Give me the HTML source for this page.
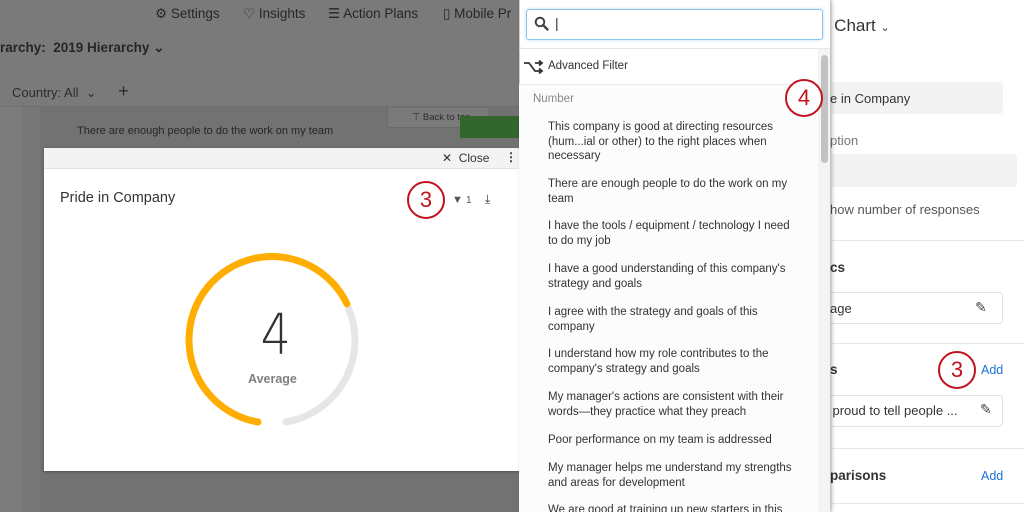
<!DOCTYPE html>
<html><head><meta charset="utf-8"><style>
*{margin:0;padding:0;box-sizing:border-box}
html,body{width:1024px;height:512px;overflow:hidden}
body{position:relative;background:#767676;font-family:"Liberation Sans",sans-serif}
.a{position:absolute}
.t{position:absolute;white-space:nowrap}
.os{font-family:"DejaVu Sans","Liberation Sans",sans-serif}
.item{position:absolute;left:548px;font-size:11.5px;line-height:14.5px;color:#333;width:250px}
.circ{position:absolute;width:38px;height:38px;border:2.5px solid #c1121f;border-radius:50%;background:#fff;color:#c1121f;font-size:22px;text-align:center;line-height:33px;font-family:"Liberation Sans",sans-serif}
</style></head><body>
<div class="a" style="left:0;top:0;width:22px;height:512px;background:#7c7c7c"></div>
<div class="a" style="left:0;top:0;width:830px;height:107px;background:#7a7a7a"></div>
<div class="a" style="left:0;top:106px;width:830px;height:1px;background:#6e6e6e"></div>
<div class="a" style="left:22px;top:107px;width:18px;height:405px;background:#777"></div>
<div class="a" style="left:40px;top:107px;width:480px;height:405px;background:#727272"></div>
<div class="t" style="left:155px;top:6px;font-size:13.5px;color:#262626">⚙ Settings</div>
<div class="t" style="left:243px;top:6px;font-size:13.5px;color:#262626">♡ Insights</div>
<div class="t" style="left:328px;top:6px;font-size:13.5px;color:#262626">☰ Action Plans</div>
<div class="t" style="left:443px;top:6px;font-size:13.5px;color:#262626">▯ Mobile Pr</div>
<div class="t" style="left:0;top:40px;font-size:13.5px;font-weight:bold;color:#262626">rarchy:&nbsp; 2019 Hierarchy ⌄</div>
<div class="t" style="left:12px;top:81px;font-size:13px;color:#2c2c2c">Country: All&nbsp; ⌄ &nbsp; &nbsp; &nbsp;<span style="font-size:18px">+</span></div>
<div class="a" style="left:387px;top:108px;width:103px;height:20px;background:#7a7a7a;border:1px solid #6a6a6a;border-top:none;border-radius:0 0 3px 3px"></div>
<div class="t" style="left:412px;top:112px;font-size:9.5px;color:#2e2e2e">⊤ Back to top</div>
<div class="a" style="left:460px;top:116px;width:60px;height:22px;background:#33662d"></div>
<div class="t" style="left:77px;top:125px;font-size:11px;color:#262626">There are enough people to do the work on my team</div>
<div class="a" style="left:44px;top:148px;width:476px;height:323px;background:#fff;box-shadow:0 1px 3px rgba(0,0,0,.3)"></div>
<div class="a" style="left:44px;top:148px;width:476px;height:21px;background:#f3f3f3;border-bottom:1px solid #e3e3e3"></div>
<div class="t" style="left:442px;top:151px;font-size:12px;color:#333">✕&nbsp; Close</div>
<div class="t" style="left:505px;top:150px;font-size:12px;color:#333;font-weight:bold">⋮</div>
<div class="t" style="left:60px;top:190px;font-size:14.5px;color:#333">Pride in Company</div>
<div class="t" style="left:452px;top:194px;font-size:11px;color:#555">▼ <span style="font-size:10px">1</span></div>
<div class="t" style="left:485px;top:192px;font-size:12px;color:#333">⤓</div>
<svg class="a" style="left:44px;top:148px" width="476" height="323">
<g transform="translate(228,192)" fill="none" stroke-width="7" stroke-linecap="round">
<path d="M -83 1 A 83 83 0 0 0 -14 82" stroke="#ffae00"/>
<path d="M -83 -1 A 83 83 0 0 1 75 -36" stroke="#ffae00"/>
<path d="M 76 -33 A 83 83 0 0 1 83 -1" stroke="#e6e6e6" stroke-linecap="butt"/>
<path d="M 83 1 A 83 83 0 0 1 14 82" stroke="#e6e6e6"/>
</g>
</svg>
<div class="t" style="left:258px;top:306px;font-size:56px;font-weight:300;color:#333;font-family:'DejaVu Sans',sans-serif;transform:scaleX(.85);line-height:60px">4</div>
<div class="t" style="left:248px;top:372px;font-size:12.5px;font-weight:bold;color:#808080">Average</div>
<div class="a" style="left:818px;top:0;width:206px;height:512px;background:#fff"></div>
<div class="a" style="left:818px;top:0;width:14px;height:512px;background:linear-gradient(90deg,#ddd,#f6f6f6)"></div>
<div class="t" style="left:820px;top:16px;font-size:17px;color:#333">e Chart <span style="font-size:11px">⌄</span></div>
<div class="a" style="left:820px;top:82px;width:183px;height:32px;background:#f3f3f3;border-radius:4px"></div>
<div class="t" style="left:830px;top:91px;font-size:13px;color:#333">e in Company</div>
<div class="t" style="left:830px;top:133px;font-size:13px;color:#777">ption</div>
<div class="a" style="left:820px;top:154px;width:197px;height:33px;background:#f3f3f3;border-radius:4px"></div>
<div class="t" style="left:830px;top:202px;font-size:13px;color:#555">how number of responses</div>
<div class="a" style="left:820px;top:240px;width:204px;height:1px;background:#e6e6e6"></div>
<div class="t" style="left:830px;top:260px;font-size:13.5px;font-weight:bold;color:#333">cs</div>
<div class="a" style="left:820px;top:292px;width:183px;height:32px;border:1px solid #e2e2e2;border-radius:4px"></div>
<div class="t" style="left:830px;top:301px;font-size:13px;color:#333">age</div>
<div class="t" style="left:975px;top:299px;font-size:14px;color:#444">✎</div>
<div class="a" style="left:820px;top:343px;width:204px;height:1px;background:#e6e6e6"></div>
<div class="t" style="left:830px;top:362px;font-size:13.5px;font-weight:bold;color:#333">s</div>
<div class="t" style="left:981px;top:363px;font-size:12.5px;color:#1a73d9">Add</div>
<div class="a" style="left:820px;top:395px;width:183px;height:32px;border:1px solid #e2e2e2;border-radius:4px"></div>
<div class="t" style="left:826px;top:403px;font-size:13px;color:#333">l proud to tell people ...</div>
<div class="t" style="left:980px;top:401px;font-size:14px;color:#444">✎</div>
<div class="a" style="left:820px;top:448px;width:204px;height:1px;background:#e6e6e6"></div>
<div class="t" style="left:830px;top:468px;font-size:13.5px;font-weight:bold;color:#333">parisons</div>
<div class="t" style="left:981px;top:469px;font-size:12.5px;color:#1a73d9">Add</div>
<div class="a" style="left:820px;top:503px;width:204px;height:1px;background:#e6e6e6"></div>
<div class="a" style="left:519px;top:0;width:311px;height:512px;background:#fff;border-left:1px solid #ccc;box-shadow:2px 0 4px rgba(0,0,0,.25)"></div>
<div class="a" style="left:526px;top:9px;width:297px;height:31px;border:1.5px solid #8cc4ee;border-radius:3px;box-shadow:0 0 3px #b9dcf6"></div>
<svg class="a" style="left:534px;top:16px" width="16" height="16"><circle cx="6" cy="6" r="4.3" fill="none" stroke="#444" stroke-width="2"/><path d="M9 9 L13.5 13.5" stroke="#444" stroke-width="2.4" stroke-linecap="round"/></svg>
<div class="t" style="left:555px;top:15px;font-size:14px;color:#333">|</div>
<div class="a" style="left:519px;top:48px;width:311px;height:1px;background:#e5e5e5"></div>
<svg class="a" style="left:523px;top:60px" width="22" height="14"><path d="M1 3 H6 L12 11 H19 M12 3 H19 M16 0.5 L19 3 L16 5.5 M16 8.5 L19 11 L16 13.5" fill="none" stroke="#333" stroke-width="1.8"/></svg>
<div class="t" style="left:548px;top:60px;font-size:11.5px;color:#333">Advanced Filter</div>
<div class="a" style="left:519px;top:84px;width:299px;height:1px;background:#e8e8e8"></div>
<div class="a" style="left:519px;top:85px;width:299px;height:427px;background:#fcfcfc"></div>
<div class="t" style="left:533px;top:93px;font-size:11.5px;color:#888">Number</div>
<div class="item" style="top:120px">This company is good at directing resources (hum...ial or other) to the right places when necessary</div>
<div class="item" style="top:177px">There are enough people to do the work on my team</div>
<div class="item" style="top:219px">I have the tools / equipment / technology I need to do my job</div>
<div class="item" style="top:262px">I have a good understanding of this company's strategy and goals</div>
<div class="item" style="top:305px">I agree with the strategy and goals of this company</div>
<div class="item" style="top:347px">I understand how my role contributes to the company's strategy and goals</div>
<div class="item" style="top:390px">My manager's actions are consistent with their words—they practice what they preach</div>
<div class="item" style="top:433px">Poor performance on my team is addressed</div>
<div class="item" style="top:461px">My manager helps me understand my strengths and areas for development</div>
<div class="item" style="top:503px">We are good at training up new starters in this</div>
<div class="a" style="left:818px;top:49px;width:12px;height:463px;background:#f4f4f4"></div>
<div class="a" style="left:821px;top:55px;width:7px;height:108px;background:#c2c2c2;border-radius:4px"></div>
<div class="circ" style="left:407px;top:181px">3</div>
<div class="circ" style="left:785px;top:79px">4</div>
<div class="circ" style="left:938px;top:351px">3</div>
</body></html>
